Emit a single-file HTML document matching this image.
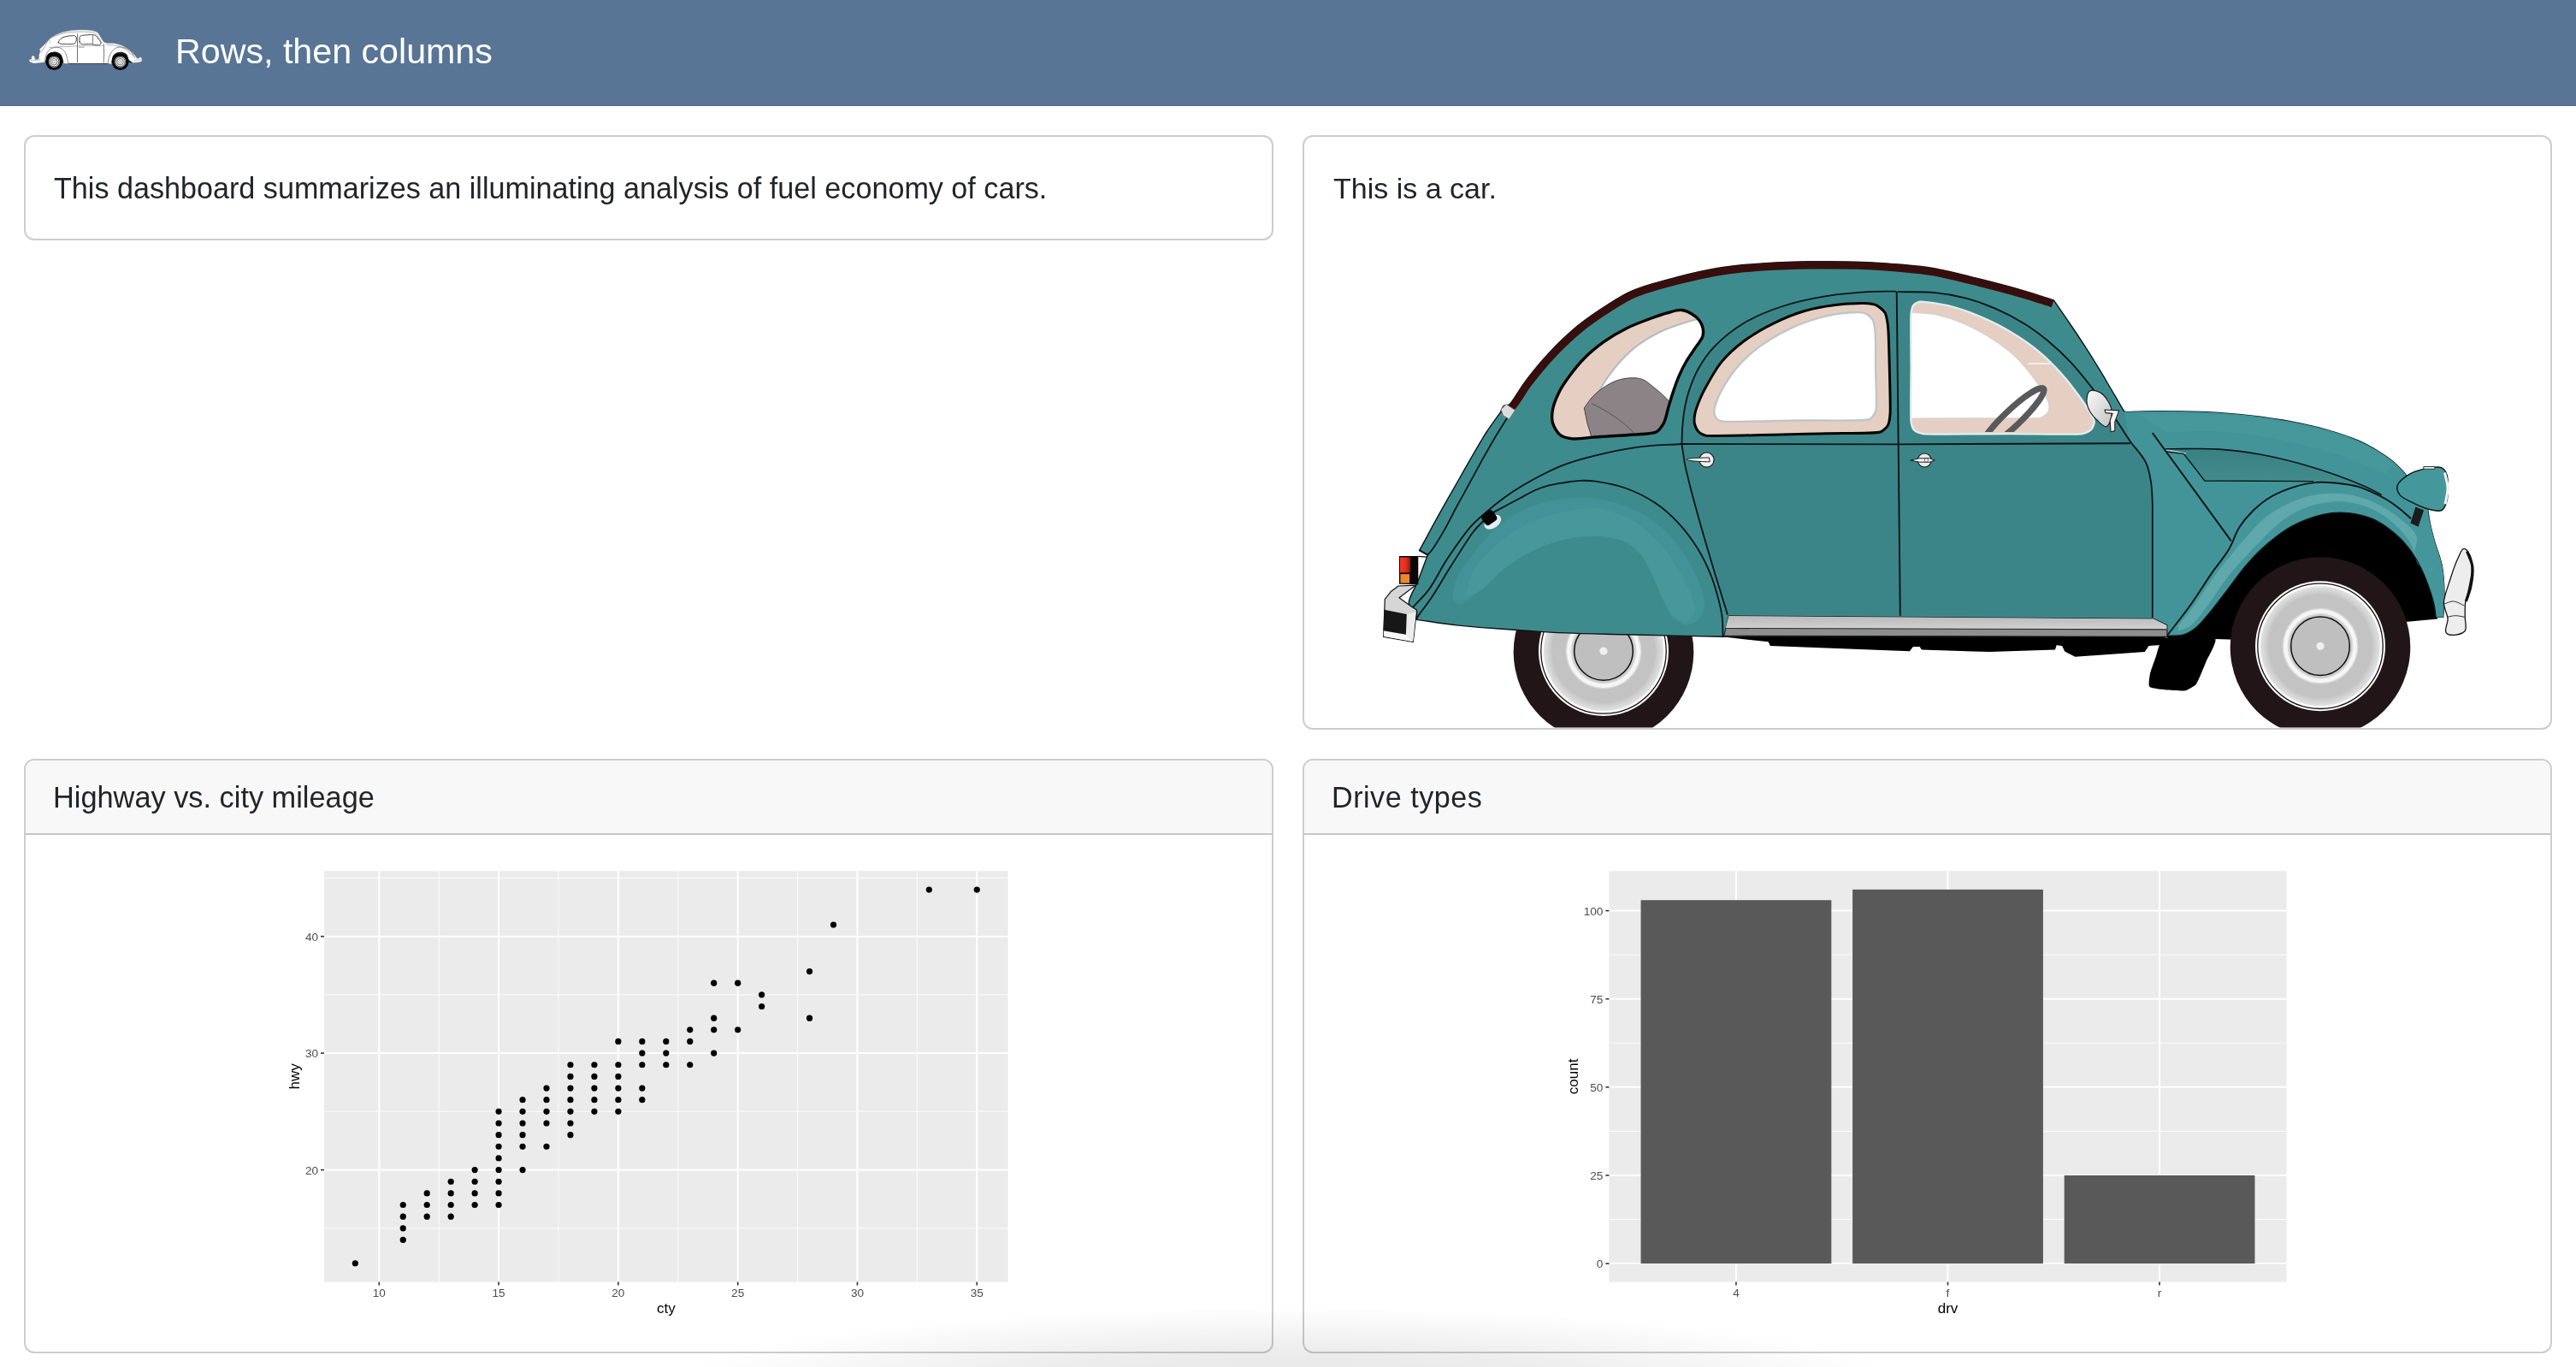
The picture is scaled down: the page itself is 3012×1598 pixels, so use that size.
<!DOCTYPE html>
<html lang="en">
<head>
<meta charset="utf-8">
<title>Rows, then columns</title>
<style>
html,body{margin:0;padding:0;}
body{width:3012px;height:1598px;overflow:hidden;background:#fff;position:relative;font-family:"Liberation Sans",sans-serif;color:#212529;}
.nav{position:absolute;left:0;top:0;width:3012px;height:124px;background:#587596;box-sizing:border-box;border-bottom:1px solid #4f6c92;}
.brand{will-change:transform;position:absolute;left:205px;top:0;height:121.5px;line-height:121.5px;font-size:41.2px;color:#fff;white-space:nowrap;}
.card{position:absolute;box-sizing:border-box;border:2px solid #cdcdcd;border-radius:12px;background:#fff;overflow:hidden;}
.card .hd{position:absolute;left:0;top:0;right:0;height:85px;background:#f8f8f8;border-bottom:2px solid #c7c7c7;}
.txt{will-change:transform;position:absolute;font-size:34.15px;white-space:nowrap;line-height:40px;}
svg{position:absolute;left:0;top:0;will-change:transform;}
.tk{font-family:"Liberation Sans",sans-serif;font-size:13.6px;fill:#4d4d4d;}
.ti{font-family:"Liberation Sans",sans-serif;font-size:17px;fill:#000;}
.shade{position:absolute;left:0;top:1500px;width:3012px;height:98px;pointer-events:none;
 background:radial-gradient(ellipse 720px 90px at 1508px 118px, rgba(0,0,0,.10) 0%, rgba(0,0,0,.07) 45%, rgba(0,0,0,0) 100%);}
</style>
</head>
<body>
<div class="nav">
<svg width="3012" height="124" viewBox="0 0 3012 124"><g transform="translate(24,24) scale(0.06219)">
<path d="M165,750C166,742.9 172.2,732.2 178,728C184.3,723.5 199.6,727.6 205,722C213.6,713.1 202.8,677.3 215,668C225.5,660 252.2,663.2 262,672C272.6,681.5 261.2,712.7 272,722C285.4,733.5 321.2,736 335,725C353.9,709.9 344.7,663.6 350,640C355.1,617.3 375.9,569.7 372,560C369.6,553.9 352.8,554.5 352,548C350.7,537.6 408.5,492.2 430,470C451.4,447.9 483.3,411.7 505,390C525.3,369.7 556.9,337.1 580,320C606,300.7 650.7,275.7 680,262C712.4,246.8 765.6,227.7 800,218C841.2,206.4 907.6,193.9 950,188C991.7,182.2 1057.9,177.4 1100,176C1142,174.6 1208.1,175 1250,178C1286.6,180.6 1350.8,186.9 1380,195C1398.2,200.1 1427.2,210.2 1442,222C1463.3,238.9 1484.9,277.4 1500,300C1514.5,321.7 1530.6,360.5 1548,380C1560.2,393.7 1582.8,413.6 1600,420C1627.6,430.2 1708.5,421.4 1750,428C1792.9,434.8 1859.5,452.3 1900,468C1929.4,479.4 1973.6,502.8 2000,520C2030,539.6 2074.1,575.2 2100,600C2121.5,620.6 2156.5,664.4 2170,680C2178.4,689.8 2187.5,711.9 2200,715C2218.2,719.4 2245.3,681.6 2262,690C2280.1,699.1 2290.4,742.6 2280,760C2263.4,787.8 2181.1,787.6 2150,792C2130.6,794.8 2099.6,794.2 2080,795C2048.6,796.3 1763.3,809.6 1640,812C1442.8,815.8 1097.4,818.1 900,812C776.6,808.2 496,784.5 460,785C437.5,785.3 402.4,790.2 380,792C344.1,794.9 286.1,807.5 250,802C226.2,798.4 176.1,777 170,770C166.2,765.7 164.2,755.7 165,750Z" fill="#fff" stroke="#8d97a3" stroke-width="9"/>
<path d="M470,760C480,723.3 478,681 500,650C518.7,623.6 549.3,605.4 580,595C611.6,584.3 647.7,581.6 680,590C710.4,597.9 739.8,615.9 760,640C783,667.5 791.3,708.8 800,740C805.5,759.5 806.7,780 810,800L470,800Z" fill="#111"/>
<path d="M1710,770C1720,733.3 1718.6,691.4 1740,660C1758.7,632.4 1788.7,611.3 1820,600C1851.4,588.7 1887.5,587.4 1920,595C1949.8,602 1979.8,617 2000,640C2023.7,667 2017.6,712 2040,740C2060.2,765.3 2093.3,776.7 2120,795L1710,800Z" fill="#222"/>
<circle cx="632" cy="775" r="158" fill="#050505"/>
<circle cx="632" cy="775" r="104" fill="#fff"/>
<circle cx="632" cy="775" r="90" fill="none" stroke="#111" stroke-width="13"/>
<circle cx="632" cy="775" r="60" fill="none" stroke="#333" stroke-width="11"/>
<circle cx="632" cy="775" r="34" fill="none" stroke="#777" stroke-width="9"/>
<circle cx="632" cy="775" r="10" fill="#777"/>
<circle cx="1875" cy="775" r="158" fill="#050505"/>
<circle cx="1875" cy="775" r="104" fill="#fff"/>
<circle cx="1875" cy="775" r="90" fill="none" stroke="#111" stroke-width="13"/>
<circle cx="1875" cy="775" r="60" fill="none" stroke="#333" stroke-width="11"/>
<circle cx="1875" cy="775" r="34" fill="none" stroke="#777" stroke-width="9"/>
<circle cx="1875" cy="775" r="10" fill="#777"/>
<path d="M455,780C463.3,736.7 463.3,690.8 480,650C496,611.1 517.3,571.5 550,545C577.9,522.4 614.3,509.1 650,505C686.9,500.8 726.8,505.4 760,522C793.3,538.6 820.2,568.4 840,600C862.4,635.7 868.8,679.3 880,720C888.3,750.3 893.3,781.3 900,812" fill="none" stroke="#4a4a4a" stroke-width="10.2" stroke-linecap="round"/>
<path d="M1640,812C1646.7,774.7 1647.8,735.9 1660,700C1674,659.1 1693.3,619 1720,585C1741.9,557.1 1768,530.2 1800,515C1830.5,500.5 1866.4,494.2 1900,498C1953.8,504 2007.6,526.4 2050,560C2094.9,595.7 2116.7,653.3 2150,700" fill="none" stroke="#4a4a4a" stroke-width="10.2" stroke-linecap="round"/>
<path d="M710,412C709.8,401.3 737.5,358.6 760,340C785.3,319.1 818.3,308.4 850,300C898.6,287.1 977.4,282.1 1000,285C1014.1,286.8 1031.4,288.7 1040,300C1053.8,318.1 1052.2,353.7 1047,380C1043.2,399.2 1036.5,421.5 1020,432C993.7,448.8 842.2,444.8 800,442C773.6,440.3 731.1,433.6 722,428C716.3,424.5 710.1,418.7 710,412Z" fill="none" stroke="#3a3a3a" stroke-width="15.299999999999999" stroke-linecap="round"/>
<path d="M1112,400C1106.4,376 1107.6,316.3 1118,300C1124.5,289.8 1138.3,286.1 1150,283C1168.7,278 1356.5,256.8 1400,275C1427.2,286.4 1443.5,315.5 1460,340C1480.6,370.6 1526.6,408.8 1507,440C1475.7,489.9 1369,442.1 1300,442C1245,441.9 1156.2,452.5 1135,440C1121.7,432.2 1115.5,415 1112,400Z" fill="none" stroke="#3a3a3a" stroke-width="15.299999999999999" stroke-linecap="round"/>
<path d="M1360,278L1358,440" stroke="#2a2a2a" stroke-width="10"/>
<path d="M1072,245L1068,790" stroke="#4a4a4a" stroke-width="13"/>
<path d="M1565,440L1570,640L1562,795" stroke="#4a4a4a" stroke-width="12" fill="none"/>
<path d="M1088,500L1200,503" stroke="#555" stroke-width="9"/>
<path d="M540,505C593.3,501.7 646.6,497.3 700,495C766.6,492.1 833.4,493.2 900,490C956.7,487.3 1013.3,482 1070,478" fill="none" stroke="#6a6a6a" stroke-width="8.5" stroke-linecap="round"/>
<path d="M1070,478C1233.3,475.3 1396.7,472.7 1560,470" fill="none" stroke="#777" stroke-width="8.5" stroke-linecap="round"/>
<path d="M650,290C700,273.3 748.6,251.7 800,240C865.5,225.1 933,219.6 1000,215C1083.1,209.3 1169.3,206.3 1250,212C1300.5,215.5 1365.1,216.3 1400,235C1421.8,246.7 1435.1,270.2 1450,290C1473.8,321.7 1503.3,376.7 1530,420" fill="none" stroke="#6a6a6a" stroke-width="8.5" stroke-linecap="round"/>
<path d="M1620,455C1663.3,458.3 1707.2,457.7 1750,465C1794.2,472.6 1838.1,484.1 1880,500C1921.8,515.9 1963.7,533.9 2000,560C2034.4,584.8 2060,620 2090,650" fill="none" stroke="#6a6a6a" stroke-width="8.5" stroke-linecap="round"/>
<path d="M1840,470C1876.7,486.7 1915.2,499.7 1950,520C1989.2,542.8 2026.5,569.4 2060,600C2086.2,623.9 2106.7,653.3 2130,680" fill="none" stroke="#aaa" stroke-width="6.8" stroke-linecap="round"/>
<path d="M505,395C486.7,430 469.3,465.5 450,500C431,533.9 410,566.7 390,600" fill="none" stroke="#6a6a6a" stroke-width="8.5" stroke-linecap="round"/>
<path d="M540,370C546.7,386.7 553.3,403.3 560,420" fill="none" stroke="#777" stroke-width="8.5" stroke-linecap="round"/>
<path d="M600,320C613.3,310 626.7,300 640,290" fill="none" stroke="#777" stroke-width="8.5" stroke-linecap="round"/>
<path d="M905,812L1635,812" stroke="#111" stroke-width="12"/>
<path d="M200,745C243.3,745 308.2,747.7 330,745C343.6,743.3 356.7,738.3 370,735" fill="none" stroke="#999" stroke-width="10.2" stroke-linecap="round"/>
<path d="M2150,745C2190,741.7 2230,738.3 2270,735" fill="none" stroke="#999" stroke-width="10.2" stroke-linecap="round"/>
</g></svg>

<div class="brand">Rows, then columns</div>
</div>

<div class="card" style="left:28px;top:158px;width:1461px;height:123px;"></div>
<div class="txt" style="left:63px;top:200px;">This dashboard summarizes an illuminating analysis of fuel economy of cars.</div>

<div class="card" style="left:1523px;top:158px;width:1461px;height:695px;"></div>
<div class="txt" style="left:1559px;top:200px;font-size:34px;">This is a car.</div>

<div class="card" style="left:28px;top:887px;width:1461px;height:695px;"><div class="hd"></div></div>
<div class="txt" style="left:62px;top:912px;font-size:34.35px;">Highway vs. city mileage</div>

<div class="card" style="left:1523px;top:887px;width:1461px;height:695px;"><div class="hd"></div></div>
<div class="txt" style="left:1557px;top:912px;letter-spacing:.5px;">Drive types</div>

<svg width="3012" height="1598" viewBox="0 0 3012 1598">
<g id="scatter">
<rect x="379" y="1018.2" width="799.6" height="480.4" fill="#ebebeb"/>
<line x1="513.2" x2="513.2" y1="1018.2" y2="1498.6" stroke="#fff" stroke-width="1" stroke-opacity=".85"/>
<line x1="652.99" x2="652.99" y1="1018.2" y2="1498.6" stroke="#fff" stroke-width="1" stroke-opacity=".85"/>
<line x1="792.78" x2="792.78" y1="1018.2" y2="1498.6" stroke="#fff" stroke-width="1" stroke-opacity=".85"/>
<line x1="932.57" x2="932.57" y1="1018.2" y2="1498.6" stroke="#fff" stroke-width="1" stroke-opacity=".85"/>
<line x1="1072.36" x2="1072.36" y1="1018.2" y2="1498.6" stroke="#fff" stroke-width="1" stroke-opacity=".85"/>
<line y1="1435.82" y2="1435.82" x1="379" x2="1178.6" stroke="#fff" stroke-width="1" stroke-opacity=".85"/>
<line y1="1299.34" y2="1299.34" x1="379" x2="1178.6" stroke="#fff" stroke-width="1" stroke-opacity=".85"/>
<line y1="1162.87" y2="1162.87" x1="379" x2="1178.6" stroke="#fff" stroke-width="1" stroke-opacity=".85"/>
<line y1="1026.39" y2="1026.39" x1="379" x2="1178.6" stroke="#fff" stroke-width="1" stroke-opacity=".85"/>
<line x1="443.3" x2="443.3" y1="1018.2" y2="1498.6" stroke="#fff" stroke-width="2"/>
<line x1="583.09" x2="583.09" y1="1018.2" y2="1498.6" stroke="#fff" stroke-width="2"/>
<line x1="722.88" x2="722.88" y1="1018.2" y2="1498.6" stroke="#fff" stroke-width="2"/>
<line x1="862.67" x2="862.67" y1="1018.2" y2="1498.6" stroke="#fff" stroke-width="2"/>
<line x1="1002.46" x2="1002.46" y1="1018.2" y2="1498.6" stroke="#fff" stroke-width="2"/>
<line x1="1142.25" x2="1142.25" y1="1018.2" y2="1498.6" stroke="#fff" stroke-width="2"/>
<line y1="1367.58" y2="1367.58" x1="379" x2="1178.6" stroke="#fff" stroke-width="2"/>
<line y1="1231.1" y2="1231.1" x1="379" x2="1178.6" stroke="#fff" stroke-width="2"/>
<line y1="1094.63" y2="1094.63" x1="379" x2="1178.6" stroke="#fff" stroke-width="2"/>
<circle cx="415.35" cy="1476.76" r="3.6"/>
<circle cx="471.26" cy="1449.47" r="3.6"/>
<circle cx="471.26" cy="1435.82" r="3.6"/>
<circle cx="471.26" cy="1422.17" r="3.6"/>
<circle cx="471.26" cy="1408.52" r="3.6"/>
<circle cx="499.22" cy="1422.17" r="3.6"/>
<circle cx="499.22" cy="1408.52" r="3.6"/>
<circle cx="499.22" cy="1394.88" r="3.6"/>
<circle cx="527.18" cy="1422.17" r="3.6"/>
<circle cx="527.18" cy="1408.52" r="3.6"/>
<circle cx="527.18" cy="1394.88" r="3.6"/>
<circle cx="527.18" cy="1381.23" r="3.6"/>
<circle cx="555.14" cy="1408.52" r="3.6"/>
<circle cx="555.14" cy="1394.88" r="3.6"/>
<circle cx="555.14" cy="1381.23" r="3.6"/>
<circle cx="555.14" cy="1367.58" r="3.6"/>
<circle cx="583.09" cy="1408.52" r="3.6"/>
<circle cx="583.09" cy="1394.88" r="3.6"/>
<circle cx="583.09" cy="1381.23" r="3.6"/>
<circle cx="583.09" cy="1367.58" r="3.6"/>
<circle cx="583.09" cy="1353.93" r="3.6"/>
<circle cx="583.09" cy="1340.29" r="3.6"/>
<circle cx="583.09" cy="1326.64" r="3.6"/>
<circle cx="583.09" cy="1312.99" r="3.6"/>
<circle cx="583.09" cy="1299.34" r="3.6"/>
<circle cx="611.05" cy="1367.58" r="3.6"/>
<circle cx="611.05" cy="1340.29" r="3.6"/>
<circle cx="611.05" cy="1326.64" r="3.6"/>
<circle cx="611.05" cy="1312.99" r="3.6"/>
<circle cx="611.05" cy="1299.34" r="3.6"/>
<circle cx="611.05" cy="1285.7" r="3.6"/>
<circle cx="639.01" cy="1340.29" r="3.6"/>
<circle cx="639.01" cy="1312.99" r="3.6"/>
<circle cx="639.01" cy="1299.34" r="3.6"/>
<circle cx="639.01" cy="1285.7" r="3.6"/>
<circle cx="639.01" cy="1272.05" r="3.6"/>
<circle cx="666.97" cy="1326.64" r="3.6"/>
<circle cx="666.97" cy="1312.99" r="3.6"/>
<circle cx="666.97" cy="1299.34" r="3.6"/>
<circle cx="666.97" cy="1285.7" r="3.6"/>
<circle cx="666.97" cy="1272.05" r="3.6"/>
<circle cx="666.97" cy="1258.4" r="3.6"/>
<circle cx="666.97" cy="1244.75" r="3.6"/>
<circle cx="694.93" cy="1299.34" r="3.6"/>
<circle cx="694.93" cy="1285.7" r="3.6"/>
<circle cx="694.93" cy="1272.05" r="3.6"/>
<circle cx="694.93" cy="1258.4" r="3.6"/>
<circle cx="694.93" cy="1244.75" r="3.6"/>
<circle cx="722.88" cy="1299.34" r="3.6"/>
<circle cx="722.88" cy="1285.7" r="3.6"/>
<circle cx="722.88" cy="1272.05" r="3.6"/>
<circle cx="722.88" cy="1258.4" r="3.6"/>
<circle cx="722.88" cy="1244.75" r="3.6"/>
<circle cx="722.88" cy="1217.46" r="3.6"/>
<circle cx="750.84" cy="1285.7" r="3.6"/>
<circle cx="750.84" cy="1272.05" r="3.6"/>
<circle cx="750.84" cy="1244.75" r="3.6"/>
<circle cx="750.84" cy="1231.1" r="3.6"/>
<circle cx="750.84" cy="1217.46" r="3.6"/>
<circle cx="778.8" cy="1244.75" r="3.6"/>
<circle cx="778.8" cy="1231.1" r="3.6"/>
<circle cx="778.8" cy="1217.46" r="3.6"/>
<circle cx="806.76" cy="1244.75" r="3.6"/>
<circle cx="806.76" cy="1217.46" r="3.6"/>
<circle cx="806.76" cy="1203.81" r="3.6"/>
<circle cx="834.72" cy="1231.1" r="3.6"/>
<circle cx="834.72" cy="1203.81" r="3.6"/>
<circle cx="834.72" cy="1190.16" r="3.6"/>
<circle cx="834.72" cy="1149.22" r="3.6"/>
<circle cx="862.67" cy="1203.81" r="3.6"/>
<circle cx="862.67" cy="1149.22" r="3.6"/>
<circle cx="890.63" cy="1176.51" r="3.6"/>
<circle cx="890.63" cy="1162.87" r="3.6"/>
<circle cx="946.55" cy="1190.16" r="3.6"/>
<circle cx="946.55" cy="1135.57" r="3.6"/>
<circle cx="974.51" cy="1080.98" r="3.6"/>
<circle cx="1086.34" cy="1040.04" r="3.6"/>
<circle cx="1142.25" cy="1040.04" r="3.6"/>
<line x1="443.3" x2="443.3" y1="1498.6" y2="1502.6" stroke="#333" stroke-width="1.6"/>
<text x="443.3" y="1515.9" text-anchor="middle" class="tk">10</text>
<line x1="583.09" x2="583.09" y1="1498.6" y2="1502.6" stroke="#333" stroke-width="1.6"/>
<text x="583.09" y="1515.9" text-anchor="middle" class="tk">15</text>
<line x1="722.88" x2="722.88" y1="1498.6" y2="1502.6" stroke="#333" stroke-width="1.6"/>
<text x="722.88" y="1515.9" text-anchor="middle" class="tk">20</text>
<line x1="862.67" x2="862.67" y1="1498.6" y2="1502.6" stroke="#333" stroke-width="1.6"/>
<text x="862.67" y="1515.9" text-anchor="middle" class="tk">25</text>
<line x1="1002.46" x2="1002.46" y1="1498.6" y2="1502.6" stroke="#333" stroke-width="1.6"/>
<text x="1002.46" y="1515.9" text-anchor="middle" class="tk">30</text>
<line x1="1142.25" x2="1142.25" y1="1498.6" y2="1502.6" stroke="#333" stroke-width="1.6"/>
<text x="1142.25" y="1515.9" text-anchor="middle" class="tk">35</text>
<line y1="1367.58" y2="1367.58" x1="375" x2="379" stroke="#333" stroke-width="1.6"/>
<text x="372" y="1372.58" text-anchor="end" class="tk">20</text>
<line y1="1231.1" y2="1231.1" x1="375" x2="379" stroke="#333" stroke-width="1.6"/>
<text x="372" y="1236.1" text-anchor="end" class="tk">30</text>
<line y1="1094.63" y2="1094.63" x1="375" x2="379" stroke="#333" stroke-width="1.6"/>
<text x="372" y="1099.63" text-anchor="end" class="tk">40</text>
<text x="778.8" y="1534.9" text-anchor="middle" class="ti">cty</text>
<text transform="translate(349.8,1258.4) rotate(-90)" text-anchor="middle" class="ti">hwy</text>
</g>
<g id="bars">
<rect x="1881.4" y="1018.2" width="792.2" height="480.4" fill="#ebebeb"/>
<line y1="1425.54" y2="1425.54" x1="1881.4" x2="2673.6" stroke="#fff" stroke-width="1" stroke-opacity=".85"/>
<line y1="1322.41" y2="1322.41" x1="1881.4" x2="2673.6" stroke="#fff" stroke-width="1" stroke-opacity=".85"/>
<line y1="1219.29" y2="1219.29" x1="1881.4" x2="2673.6" stroke="#fff" stroke-width="1" stroke-opacity=".85"/>
<line y1="1116.16" y2="1116.16" x1="1881.4" x2="2673.6" stroke="#fff" stroke-width="1" stroke-opacity=".85"/>
<line y1="1477.1" y2="1477.1" x1="1881.4" x2="2673.6" stroke="#fff" stroke-width="2"/>
<line y1="1373.97" y2="1373.97" x1="1881.4" x2="2673.6" stroke="#fff" stroke-width="2"/>
<line y1="1270.85" y2="1270.85" x1="1881.4" x2="2673.6" stroke="#fff" stroke-width="2"/>
<line y1="1167.72" y2="1167.72" x1="1881.4" x2="2673.6" stroke="#fff" stroke-width="2"/>
<line y1="1064.6" y2="1064.6" x1="1881.4" x2="2673.6" stroke="#fff" stroke-width="2"/>
<line x1="2029.94" x2="2029.94" y1="1018.2" y2="1498.6" stroke="#fff" stroke-width="2"/>
<line x1="2277.5" x2="2277.5" y1="1018.2" y2="1498.6" stroke="#fff" stroke-width="2"/>
<line x1="2525.06" x2="2525.06" y1="1018.2" y2="1498.6" stroke="#fff" stroke-width="2"/>
<rect x="1918.53" y="1052.22" width="222.81" height="424.88" fill="#595959"/>
<rect x="2166.1" y="1039.85" width="222.81" height="437.25" fill="#595959"/>
<rect x="2413.66" y="1373.97" width="222.81" height="103.12" fill="#595959"/>
<line x1="2029.94" x2="2029.94" y1="1498.6" y2="1502.6" stroke="#333" stroke-width="1.6"/>
<text x="2029.94" y="1515.9" text-anchor="middle" class="tk">4</text>
<line x1="2277.5" x2="2277.5" y1="1498.6" y2="1502.6" stroke="#333" stroke-width="1.6"/>
<text x="2277.5" y="1515.9" text-anchor="middle" class="tk">f</text>
<line x1="2525.06" x2="2525.06" y1="1498.6" y2="1502.6" stroke="#333" stroke-width="1.6"/>
<text x="2525.06" y="1515.9" text-anchor="middle" class="tk">r</text>
<line y1="1477.1" y2="1477.1" x1="1877.4" x2="1881.4" stroke="#333" stroke-width="1.6"/>
<text x="1874.4" y="1482.1" text-anchor="end" class="tk">0</text>
<line y1="1373.97" y2="1373.97" x1="1877.4" x2="1881.4" stroke="#333" stroke-width="1.6"/>
<text x="1874.4" y="1378.97" text-anchor="end" class="tk">25</text>
<line y1="1270.85" y2="1270.85" x1="1877.4" x2="1881.4" stroke="#333" stroke-width="1.6"/>
<text x="1874.4" y="1275.85" text-anchor="end" class="tk">50</text>
<line y1="1167.72" y2="1167.72" x1="1877.4" x2="1881.4" stroke="#333" stroke-width="1.6"/>
<text x="1874.4" y="1172.72" text-anchor="end" class="tk">75</text>
<line y1="1064.6" y2="1064.6" x1="1877.4" x2="1881.4" stroke="#333" stroke-width="1.6"/>
<text x="1874.4" y="1069.6" text-anchor="end" class="tk">100</text>
<text x="2277.5" y="1534.9" text-anchor="middle" class="ti">drv</text>
<text transform="translate(1845.2,1258.4) rotate(-90)" text-anchor="middle" class="ti">count</text>
</g>
</svg>
<svg width="3012" height="1598" viewBox="0 0 3012 1598">
<defs><clipPath id="cardclip"><rect x="1525" y="160" width="1457" height="690.6" rx="12"/></clipPath>
<clipPath id="bodyclip"><path d="M1754.3,482.1C1755.6,479.6 1756,476.3 1758.2,474.5C1760,473.1 1763,474.2 1764.8,472.9C1767.8,470.9 1777.1,454.2 1783.9,445.3C1792.2,434.4 1800.8,423.7 1810.2,413.7C1821.2,401.9 1832.8,390.6 1845.3,380.4C1856.4,371.3 1868.3,363.4 1880.4,355.8C1889.5,350.1 1898.6,344.2 1908.5,340C1924.3,333.2 1942.6,328.8 1960,324.2C1977.4,319.7 1994.9,315.6 2012.7,312.8C2030.1,310.1 2047.7,308.7 2065.3,307.6C2082.8,306.4 2100.4,306 2118,305.8C2135.5,305.6 2153.1,305.6 2170.6,306.1C2188.2,306.7 2205.8,307.7 2223.3,309.3C2236.5,310.5 2249.6,311.7 2262.7,314C2280.4,317.2 2297.8,322 2315.3,326.3C2332.9,330.7 2350.5,335.3 2368,340.4C2379.2,343.6 2390.2,347.4 2401.3,350.9C2407.8,360.3 2414.3,369.6 2420.6,379C2426.6,387.7 2432.5,396.5 2438.2,405.3C2444.2,414.6 2450,424 2455.7,433.4C2461.7,443.3 2467.7,453.9 2473.3,463.2C2476.8,469.1 2482.6,479.9 2483.8,480.8C2484.6,481.4 2485.6,481.3 2486.5,481.6C2500.7,481.3 2514.8,480.7 2528.9,480.8C2550.7,480.8 2572.4,481 2594.1,482.4C2610.5,483.4 2626.8,485.1 2643.1,487.3C2659.4,489.5 2675.8,492.1 2692,495.4C2702.9,497.7 2713.8,500.4 2724.6,503.6C2735.6,506.9 2746.6,510.4 2757.2,515C2765.7,518.7 2773.8,523.2 2781.6,528C2787.3,531.5 2792.9,535.2 2798,539.5C2802.7,543.4 2808.1,549.2 2811,552.5C2812.8,554.6 2814.3,556.9 2815.9,559L2838.7,595.7C2839.5,600.9 2840.1,606.1 2841.2,611.2C2842.5,617.9 2844.3,624.6 2846.1,631.2C2849,641.5 2853.4,651.4 2855.4,661.9C2857.4,672.7 2857.8,683.7 2858,694.7C2858.2,703.6 2857.2,712.4 2856.8,721.3L2848.2,721.3C2847.5,716.5 2847.2,711.7 2846.1,707C2844.6,700 2842.4,693.2 2840,686.5C2837,678.1 2833.9,669.8 2829.7,661.9C2825.6,654 2821,646.3 2815.4,639.4C2810,632.6 2803.8,626.4 2797,621C2790,615.4 2782.6,610.1 2774.4,606.6C2765.4,602.7 2755.6,600.3 2745.8,599.5C2735.6,598.5 2725.1,599.3 2715.1,601.5C2702.9,604.2 2691.2,608.9 2680.2,614.8C2669.9,620.4 2660.5,627.7 2651.6,635.3C2642.7,642.8 2634.6,651.2 2627,659.9C2619.6,668.3 2613.3,677.6 2606.5,686.5C2599.7,695.4 2593.2,704.5 2586,713.1C2580.1,720.2 2574.4,728.1 2567.6,733.6C2563.3,737.1 2558.5,740.2 2553.3,741.8C2547,743.7 2540.3,742.8 2533.8,743.2L2014.5,744.3C1999.9,744 1985.3,743.8 1970.6,743.4C1947.2,742.9 1923.8,742.3 1900.4,741.7C1877,741.1 1853.6,740.9 1830.2,739.9C1806.8,738.9 1783.4,737.2 1760,735.5C1741.8,734.2 1723.5,733.1 1705.3,731.1C1688.6,729.3 1672,726.5 1655.3,724.1C1655.7,720.9 1657.6,717.5 1656.5,714.5C1655.1,710.6 1648.3,710.1 1647.4,706C1645.9,699.6 1654.5,688.3 1657.9,679.4C1660.9,671.5 1665.3,659.4 1666.7,655.7C1667.6,653.3 1668.5,651 1669.3,648.6L1659.7,643.4C1665,633.7 1670.2,623.9 1675.5,614.2C1680.6,604.8 1685.8,595.5 1691.1,586.1C1696.3,576.9 1701.6,567.7 1706.9,558.5C1712.2,549.3 1717.3,540 1722.7,530.8C1727.9,522 1732.9,513.1 1738.5,504.5C1743.5,496.9 1749,489.6 1754.3,482.1Z"/></clipPath>
<linearGradient id="hoodg" x1="0" y1="0" x2="0" y2="1"><stop offset="0" stop-color="#3a8083"/><stop offset="1" stop-color="#44918f"/></linearGradient>
<linearGradient id="mirg" x1="0" y1="0" x2="1" y2="1"><stop offset="0" stop-color="#fafafa"/><stop offset="1" stop-color="#c4c4c4"/></linearGradient>
<radialGradient id="hubg" cx=".5" cy=".5" r=".5"><stop offset=".86" stop-color="#c3c3c3"/><stop offset=".88" stop-color="#c9c9c9"/><stop offset="1" stop-color="#e2e2e2"/></radialGradient>
</defs>
<g clip-path="url(#cardclip)">
<path d="M2530.7,737.7L2606.5,661.9L2684.3,604.6L2756,596.4L2817.5,631.2L2848.2,694.7L2850.2,723.4L2807.2,727.5L2622.9,747.9L2590.1,746.9L2530.7,744.9Z" fill="#000"/>
<path d="M2016.3,741.9L2534.6,741.9L2526.4,754L2512.5,755L2507.8,762L2426.3,767.8L2414.2,761.5L2411.1,755L2404.6,754.3L2403,759.6L2326.1,762L2246.9,759.6L2244.6,756.1L2236.9,756.1L2232.9,761.3L2069.9,755L2067.6,750.3L2017.5,744.7Z" fill="#000"/>
<path d="M2528.7,746.9C2533.7,743.4 2585.9,740.1 2590.1,746.3C2592.8,750.2 2581.7,768.2 2579.9,772.5C2577.9,777.2 2570.1,797.3 2567.6,800.2C2566,801.9 2557.6,806.8 2555.3,807.3C2551.6,808.1 2515.9,805.9 2513.3,802.8C2511.7,800.9 2513.5,790.3 2513.9,787.9C2514.5,784.5 2519.3,771.6 2520.5,768.4C2521.8,764.8 2525.5,749.1 2528.7,746.9Z" fill="#000"/>
<circle cx="1875" cy="762.2" r="105.3" fill="#221517"/>
<circle cx="1875" cy="761" r="76" fill="#fbfbfb"/>
<circle cx="1875" cy="761" r="73.2" fill="none" stroke="#141414" stroke-width="1.3"/>
<circle cx="1875" cy="761" r="70" fill="url(#hubg)"/>
<circle cx="1875" cy="761" r="44.5" fill="#d8d8d8"/>
<circle cx="1875" cy="761" r="43" fill="#f6f6f6"/>
<circle cx="1875" cy="761" r="38.5" fill="#dcdcdc"/>
<circle cx="1875" cy="761" r="37" fill="#c9c9c9"/>
<circle cx="1875" cy="761" r="34.3" fill="#bfbfbf" stroke="#111" stroke-width="1.5"/>
<circle cx="1875" cy="761" r="4.6" fill="#efefef"/>
<circle cx="2713" cy="756.5" r="105.3" fill="#221517"/>
<circle cx="2713" cy="755.3" r="76" fill="#fbfbfb"/>
<circle cx="2713" cy="755.3" r="73.2" fill="none" stroke="#141414" stroke-width="1.3"/>
<circle cx="2713" cy="755.3" r="70" fill="url(#hubg)"/>
<circle cx="2713" cy="755.3" r="44.5" fill="#d8d8d8"/>
<circle cx="2713" cy="755.3" r="43" fill="#f6f6f6"/>
<circle cx="2713" cy="755.3" r="38.5" fill="#dcdcdc"/>
<circle cx="2713" cy="755.3" r="37" fill="#c9c9c9"/>
<circle cx="2713" cy="755.3" r="34.3" fill="#bfbfbf" stroke="#111" stroke-width="1.5"/>
<circle cx="2713" cy="755.3" r="4.6" fill="#efefef"/>
<path d="M1754.3,482.1C1755.6,479.6 1756,476.3 1758.2,474.5C1760,473.1 1763,474.2 1764.8,472.9C1767.8,470.9 1777.1,454.2 1783.9,445.3C1792.2,434.4 1800.8,423.7 1810.2,413.7C1821.2,401.9 1832.8,390.6 1845.3,380.4C1856.4,371.3 1868.3,363.4 1880.4,355.8C1889.5,350.1 1898.6,344.2 1908.5,340C1924.3,333.2 1942.6,328.8 1960,324.2C1977.4,319.7 1994.9,315.6 2012.7,312.8C2030.1,310.1 2047.7,308.7 2065.3,307.6C2082.8,306.4 2100.4,306 2118,305.8C2135.5,305.6 2153.1,305.6 2170.6,306.1C2188.2,306.7 2205.8,307.7 2223.3,309.3C2236.5,310.5 2249.6,311.7 2262.7,314C2280.4,317.2 2297.8,322 2315.3,326.3C2332.9,330.7 2350.5,335.3 2368,340.4C2379.2,343.6 2390.2,347.4 2401.3,350.9C2407.8,360.3 2414.3,369.6 2420.6,379C2426.6,387.7 2432.5,396.5 2438.2,405.3C2444.2,414.6 2450,424 2455.7,433.4C2461.7,443.3 2467.7,453.9 2473.3,463.2C2476.8,469.1 2482.6,479.9 2483.8,480.8C2484.6,481.4 2485.6,481.3 2486.5,481.6C2500.7,481.3 2514.8,480.7 2528.9,480.8C2550.7,480.8 2572.4,481 2594.1,482.4C2610.5,483.4 2626.8,485.1 2643.1,487.3C2659.4,489.5 2675.8,492.1 2692,495.4C2702.9,497.7 2713.8,500.4 2724.6,503.6C2735.6,506.9 2746.6,510.4 2757.2,515C2765.7,518.7 2773.8,523.2 2781.6,528C2787.3,531.5 2792.9,535.2 2798,539.5C2802.7,543.4 2808.1,549.2 2811,552.5C2812.8,554.6 2814.3,556.9 2815.9,559L2838.7,595.7C2839.5,600.9 2840.1,606.1 2841.2,611.2C2842.5,617.9 2844.3,624.6 2846.1,631.2C2849,641.5 2853.4,651.4 2855.4,661.9C2857.4,672.7 2857.8,683.7 2858,694.7C2858.2,703.6 2857.2,712.4 2856.8,721.3L2848.2,721.3C2847.5,716.5 2847.2,711.7 2846.1,707C2844.6,700 2842.4,693.2 2840,686.5C2837,678.1 2833.9,669.8 2829.7,661.9C2825.6,654 2821,646.3 2815.4,639.4C2810,632.6 2803.8,626.4 2797,621C2790,615.4 2782.6,610.1 2774.4,606.6C2765.4,602.7 2755.6,600.3 2745.8,599.5C2735.6,598.5 2725.1,599.3 2715.1,601.5C2702.9,604.2 2691.2,608.9 2680.2,614.8C2669.9,620.4 2660.5,627.7 2651.6,635.3C2642.7,642.8 2634.6,651.2 2627,659.9C2619.6,668.3 2613.3,677.6 2606.5,686.5C2599.7,695.4 2593.2,704.5 2586,713.1C2580.1,720.2 2574.4,728.1 2567.6,733.6C2563.3,737.1 2558.5,740.2 2553.3,741.8C2547,743.7 2540.3,742.8 2533.8,743.2L2014.5,744.3C1999.9,744 1985.3,743.8 1970.6,743.4C1947.2,742.9 1923.8,742.3 1900.4,741.7C1877,741.1 1853.6,740.9 1830.2,739.9C1806.8,738.9 1783.4,737.2 1760,735.5C1741.8,734.2 1723.5,733.1 1705.3,731.1C1688.6,729.3 1672,726.5 1655.3,724.1C1655.7,720.9 1657.6,717.5 1656.5,714.5C1655.1,710.6 1648.3,710.1 1647.4,706C1645.9,699.6 1654.5,688.3 1657.9,679.4C1660.9,671.5 1665.3,659.4 1666.7,655.7C1667.6,653.3 1668.5,651 1669.3,648.6L1659.7,643.4C1665,633.7 1670.2,623.9 1675.5,614.2C1680.6,604.8 1685.8,595.5 1691.1,586.1C1696.3,576.9 1701.6,567.7 1706.9,558.5C1712.2,549.3 1717.3,540 1722.7,530.8C1727.9,522 1732.9,513.1 1738.5,504.5C1743.5,496.9 1749,489.6 1754.3,482.1Z" fill="#3e8b8e" stroke="#0c1416" stroke-width="1.4" stroke-linejoin="round"/>
<path d="M1754.3,482.1C1755.6,479.6 1756,476.3 1758.2,474.5C1760,473.1 1763,474.2 1764.8,472.9C1767.8,470.9 1777.1,454.2 1783.9,445.3C1792.2,434.4 1800.8,423.7 1810.2,413.7C1821.2,401.9 1832.8,390.6 1845.3,380.4C1856.4,371.3 1868.3,363.4 1880.4,355.8C1889.5,350.1 1898.6,344.2 1908.5,340C1924.3,333.2 1942.6,328.8 1960,324.2C1977.4,319.7 1994.9,315.6 2012.7,312.8C2030.1,310.1 2047.7,308.7 2065.3,307.6C2082.8,306.4 2100.4,306 2118,305.8C2135.5,305.6 2153.1,305.6 2170.6,306.1C2188.2,306.7 2205.8,307.7 2223.3,309.3C2236.5,310.5 2249.6,311.7 2262.7,314C2280.4,317.2 2297.8,322 2315.3,326.3C2332.9,330.7 2350.5,335.3 2368,340.4C2379.2,343.6 2390.2,347.4 2401.3,350.9" fill="none" stroke="#380e0c" stroke-width="17.4" clip-path="url(#bodyclip)"/>
<path d="M2019.8,718C2015.1,702.8 2010.3,687.6 2005.7,672.3C1999.8,652.5 1993.8,632.6 1988.2,612.7C1983.7,596.7 1978.2,576.8 1975.2,564.7C1973.3,557.1 1971.4,549.5 1969.9,541.9C1968.5,534.3 1966.9,526.7 1966.4,519C1966,512 1966.7,505 1967.3,498C1967.9,490.9 1968.6,483.9 1969.9,476.9C1971.3,469.8 1972.9,462.7 1975.2,455.9C1978.1,447.4 1981.4,439 1985.7,431.3C1990.8,422.2 1996.7,413.4 2003.9,405.9C2014.2,395 2026.2,385.5 2039,377.8C2052.7,369.5 2067.7,363.5 2082.9,358.5C2100,352.8 2117.7,349.1 2135.5,346.2C2152.9,343.3 2173.2,341.7 2188.2,340.9C2197.5,340.4 2214.4,340.4 2216.3,340.6C2217.4,340.7 2218.5,341.1 2219.7,341.2C2221.5,341.5 2248.4,340.7 2262.7,342.1C2274.5,343.3 2286.3,345.3 2297.8,348.3C2309.8,351.4 2321.5,355.6 2332.9,360.6C2345,365.8 2356.8,372 2368,379C2377.2,384.8 2385.9,391.4 2394.3,398.3C2403.6,406 2412.4,414.1 2420.6,422.9C2430.1,432.8 2438.5,443.7 2447,454.5C2456,465.9 2464.8,477.6 2473.3,489.6C2479.4,498.2 2484.8,507.3 2490.8,515.9C2496.8,524.4 2504.9,531.7 2509.3,541.1C2512.7,548.2 2513.8,556.2 2515.1,563.9C2516.3,571.5 2516.4,579.4 2516.7,586.7C2516.9,591.3 2516.8,595.9 2516.8,600.5C2516.8,607.8 2516.8,681 2516.8,721.3Z" fill="#3b8588"/>
<path d="M2483.8,480.8C2485.7,490.2 2487,507.2 2490.8,515.9C2494.2,523.5 2505.8,533.5 2509.3,541.1C2512,546.8 2514.1,557.7 2515.1,563.9C2516,569.9 2516.5,580.9 2516.7,586.7C2516.8,590.4 2516.8,596.8 2516.8,600.5C2516.8,606.3 2516.8,689.1 2516.8,721.3L2533.8,743.2L2900,800L2900,440L2486.5,472.6Z" fill="#429498" clip-path="url(#bodyclip)"/>
<path d="M1698.3,700.4C1699.5,693.4 1699.3,686 1701.8,679.4C1705.7,669.1 1712.8,660.2 1719.4,651.3C1727.4,640.6 1735.9,630.1 1745.7,621C1754.8,612.6 1764.6,604.9 1775.5,599C1786.5,593.1 1798.5,588.9 1810.6,586C1821.8,583.3 1834.2,582.4 1845,582C1851.8,581.7 1858.6,581.8 1865.3,582.8C1876,584.3 1889.2,587.2 1900.4,591.6C1912.8,596.5 1924.8,602.9 1935.5,610.9C1945.4,618.3 1954.2,627.4 1961.9,637.2C1969.5,646.9 1975.8,657.7 1981.2,668.8C1985.6,677.8 1990,687.7 1991.7,696.9C1992.8,702.7 1993.8,708.9 1992,714.5C1990.4,719.4 1987,723.8 1982.9,726.8C1979.4,729.4 1974.7,729.7 1970.6,731.1C1965.9,727.9 1960.5,725.6 1956.6,721.5C1951.1,715.5 1948,707.7 1944.3,700.4C1939.7,691.3 1936.6,681.4 1932,672.3C1927.8,663.9 1924.2,654.8 1918,647.8C1912.2,641.2 1905,635.5 1896.9,632C1887.1,627.8 1876,627.1 1865.3,626.7C1853.5,626.3 1841.7,627.7 1830.2,630.2C1818.1,632.9 1806.3,637.2 1795.1,642.5C1782,648.7 1769.5,656.5 1758,665.3C1748.5,672.6 1741.3,682.7 1731.7,689.9C1723.5,696.1 1710,706 1705.3,705.7C1702.4,705.5 1700.6,702.2 1698.3,700.4Z" fill="#439297"/>
<path d="M1712.3,698.7C1715.8,688.2 1717.4,676.7 1722.9,667.1C1729.5,655.6 1739.4,646.2 1749.2,637.2C1757.2,629.9 1766,623.3 1775.5,617.9C1786.5,611.6 1800.4,606.5 1810.6,603C1817,600.8 1823.6,599.2 1830.2,598C1840.8,596.1 1853.6,593.2 1865.3,594.2C1877.4,595.2 1889.4,598.9 1900.4,603.9C1910,608.3 1918.7,614.6 1926.7,621.4C1935.2,628.7 1942.8,637.1 1949.6,646C1956.3,654.8 1961.8,664.4 1967.1,674.1C1971.7,682.6 1977,692.2 1979.4,700.4C1980.9,705.5 1983.1,711.1 1981.5,716.2C1979.9,721.4 1974.2,724.4 1970.6,728.5C1965.9,726.2 1960.4,725.1 1956.6,721.5C1950.7,715.9 1948,707.7 1944.3,700.4C1939.7,691.3 1936.6,681.4 1932,672.3C1927.8,663.9 1924.2,654.8 1918,647.8C1912.2,641.2 1905,635.5 1896.9,632C1887.1,627.8 1876,627.1 1865.3,626.7C1853.5,626.3 1841.7,627.7 1830.2,630.2C1818.1,632.9 1806.3,637.2 1795.1,642.5C1782,648.7 1769.5,656.5 1758,665.3C1748.5,672.6 1741.1,683.6 1731.7,689.9C1725.8,693.8 1718.8,695.8 1712.3,698.7Z" fill="#48979a"/>
<linearGradient id="hoodhl" x1="0" y1="0" x2="0" y2="1"><stop offset="0" stop-color="#4fa0a3" stop-opacity="0"/><stop offset=".45" stop-color="#4fa0a3" stop-opacity=".55"/><stop offset="1" stop-color="#4fa0a3" stop-opacity="0"/></linearGradient>
<path d="M2499.6,483.7C2531.1,484.1 2568,483.4 2594.1,484.8C2610.5,485.8 2626.8,487.6 2643.1,489.7C2659.4,491.9 2675.8,494.5 2692,497.9C2702.9,500.2 2713.8,502.8 2724.6,506C2735.6,509.3 2746.6,512.8 2757.2,517.4C2765.7,521.2 2773.8,525.7 2781.6,530.5C2787.3,534 2792.5,538.1 2798,541.9L2789.8,554.1C2781.6,550.9 2773.5,547.6 2765.3,544.4C2754.5,540 2743.8,535.1 2732.7,531.3C2719.4,526.8 2705.7,523.2 2692,519.9C2675.8,516 2659.5,512.7 2643.1,510.1C2626.8,507.5 2610.5,505.2 2594.1,504.4C2574.1,503.4 2553.9,504.9 2533.8,505.2Z" fill="#4c9da0" opacity=".45" clip-path="url(#bodyclip)"/>
<path d="M2532.2,524.8C2552.8,524.9 2573.5,523.8 2594.1,525.1C2610.5,526.2 2626.9,528.4 2643.1,531.3C2659.5,534.3 2675.8,538.3 2692,542.7C2705.7,546.5 2719.3,550.9 2732.7,555.8C2743.7,559.7 2754.7,564 2765.3,568.8C2772,571.8 2778.4,575.3 2784.9,578.6L2765.3,570.4L2740.9,565.6L2705,562.6L2577.8,562L2553.4,530.5Z" fill="url(#hoodg)"/>
<path d="M2532.2,524.8L2556.6,529.4L2554.2,531.6L2533.8,528Z" fill="#9acdd0"/>
<path d="M2532.2,524.8C2552.8,524.9 2573.5,523.8 2594.1,525.1C2610.5,526.2 2626.9,528.4 2643.1,531.3C2659.5,534.3 2675.8,538.3 2692,542.7C2705.7,546.5 2719.3,550.9 2732.7,555.8C2743.7,559.7 2754.7,564 2765.3,568.8C2772,571.8 2778.4,575.3 2784.9,578.6" fill="none" stroke="#0c1416" stroke-width="1.6"/>
<path d="M2533.8,528L2553.4,530.5L2577.8,562L2705,562.6" fill="none" stroke="#0c1416" stroke-width="1.3"/>
<path d="M2533.8,743.2C2543,731.2 2552.6,719.4 2561.4,707C2570,695 2577.6,682.3 2586,670.1C2592.7,660.5 2600.5,651.6 2606.5,641.4C2611.3,633.4 2613.5,624 2618.6,616.1C2623.2,608.9 2628.8,602.4 2634.9,596.5C2641.3,590.4 2648.4,584.7 2656.1,580.2C2664.8,575.2 2674.3,571.7 2683.8,568.8C2691.8,566.4 2700,564.6 2708.3,563.9C2716.4,563.3 2724.6,563.9 2732.7,564.7C2741,565.6 2749.2,566.6 2757.2,568.8C2762.8,570.4 2768.2,572.9 2773.5,575.3C2779,577.8 2784.6,580.4 2789.8,583.5C2795.5,586.9 2800.9,590.8 2806.1,594.9C2810.7,598.5 2814.8,602.5 2819.1,606.3L2841.2,611.2C2842.8,617.9 2844.3,624.6 2846.1,631.2C2849,641.5 2853.4,651.4 2855.4,661.9C2857.4,672.7 2857.8,683.7 2858,694.7C2858.2,703.6 2857.2,712.4 2856.8,721.3L2848.2,721.3C2847.5,716.5 2847.2,711.7 2846.1,707C2844.6,700 2842.4,693.2 2840,686.5C2837,678.1 2833.9,669.8 2829.7,661.9C2825.6,654 2821,646.3 2815.4,639.4C2810,632.6 2803.8,626.4 2797,621C2790,615.4 2782.6,610.1 2774.4,606.6C2765.4,602.7 2755.6,600.3 2745.8,599.5C2735.6,598.5 2725.1,599.3 2715.1,601.5C2702.9,604.2 2691.2,608.9 2680.2,614.8C2669.9,620.4 2660.5,627.7 2651.6,635.3C2642.7,642.8 2634.6,651.2 2627,659.9C2619.6,668.3 2613.3,677.6 2606.5,686.5C2599.7,695.4 2593.2,704.5 2586,713.1C2580.1,720.2 2574.4,728.1 2567.6,733.6C2563.3,737.1 2558.5,740.2 2553.3,741.8C2547,743.7 2540.3,742.8 2533.8,743.2Z" fill="#44969a"/>
<path d="M2547.1,731.6C2553.9,722.7 2561,714 2567.6,704.9C2575.4,694.2 2582.2,682.8 2590.1,672.2C2601.7,656.8 2614.4,641.2 2626.7,627.5C2634.5,619 2642,610 2651.2,603.1C2661.1,595.6 2672.3,589.6 2683.8,585.1C2694.2,581 2705.3,578.1 2716.4,577C2727.3,575.9 2738.4,576.5 2749,578.6C2760.3,580.8 2771.3,584.9 2781.6,590C2790.4,594.4 2798.7,600 2806.1,606.3C2813.4,612.6 2822.6,618.4 2825.7,627.5C2827.8,633.9 2821.9,641.1 2823.6,647.6C2825.7,655.7 2832.5,667.2 2837.9,668.1C2841.3,668.6 2843.4,664 2846.1,661.9C2844.1,664 2842.9,667.8 2840,668.1C2835.4,668.5 2830.7,663.8 2827.7,659.9C2822.9,653.7 2823.4,643.1 2819.1,635.7C2814.1,627 2807,619.6 2799.6,612.8C2792.7,606.5 2785.1,600.7 2776.8,596.5C2768.1,592.2 2758.6,589.2 2749,587.6C2741,586.2 2732.7,585.9 2724.6,586.7C2713.4,587.9 2702.3,590.6 2692,594.9C2683.2,598.5 2675.1,603.9 2667.5,609.6C2658.6,616.3 2650.9,624.5 2643.1,632.4C2630.5,645.1 2617.8,658.2 2606.5,672.2C2597.6,683.2 2590.6,695.7 2581.9,707C2575.4,715.4 2568.1,726.6 2561.4,731.6C2557.3,734.7 2551.9,735.7 2547.1,737.7Z" fill="#5fa8ab"/>
<path d="M2533.8,743.2C2543,731.2 2552.6,719.4 2561.4,707C2570,695 2577.6,682.3 2586,670.1C2592.7,660.5 2600.5,651.6 2606.5,641.4C2611.3,633.4 2613.5,624 2618.6,616.1C2623.2,608.9 2628.8,602.4 2634.9,596.5C2641.3,590.4 2648.4,584.7 2656.1,580.2C2664.8,575.2 2674.3,571.7 2683.8,568.8C2691.8,566.4 2700,564.6 2708.3,563.9C2716.4,563.3 2724.6,563.9 2732.7,564.7C2741,565.6 2749.2,566.6 2757.2,568.8C2762.8,570.4 2768.2,572.9 2773.5,575.3C2779,577.8 2784.6,580.4 2789.8,583.5C2795.5,586.9 2800.9,590.8 2806.1,594.9C2810.7,598.5 2814.8,602.5 2819.1,606.3" fill="none" stroke="#0c1416" stroke-width="1.9"/>
<path d="M2848.2,721.3C2847.5,716.5 2847.2,711.7 2846.1,707C2844.6,700 2842.4,693.2 2840,686.5C2837,678.1 2833.9,669.8 2829.7,661.9C2825.6,654 2821,646.3 2815.4,639.4C2810,632.6 2803.8,626.4 2797,621C2790,615.4 2782.6,610.1 2774.4,606.6C2765.4,602.7 2755.6,600.3 2745.8,599.5C2735.6,598.5 2725.1,599.3 2715.1,601.5C2702.9,604.2 2691.2,608.9 2680.2,614.8C2669.9,620.4 2660.5,627.7 2651.6,635.3C2642.7,642.8 2634.6,651.2 2627,659.9C2619.6,668.3 2613.3,677.6 2606.5,686.5C2599.7,695.4 2593.2,704.5 2586,713.1C2580.1,720.2 2574.4,728.1 2567.6,733.6C2563.3,737.1 2558.5,740.2 2553.3,741.8C2547,743.7 2540.3,742.8 2533.8,743.2" fill="none" stroke="#0c1416" stroke-width="1.2"/>
<path d="M2516.7,506L2608.8,632.4" fill="none" stroke="#0c1416" stroke-width="1.9"/>
<path d="M1762.2,488.7C1757.8,495.7 1753.3,502.7 1749,509.8C1743.6,518.9 1738.4,528.2 1733.2,537.4C1727.9,547 1722.7,556.7 1717.4,566.4C1712.2,576 1706.8,585.7 1701.6,595.3C1697,604 1692.7,612.9 1687.8,621.4C1683.6,628.6 1677.2,639 1674.6,642.5C1673,644.7 1671.1,646.6 1669.3,648.6" fill="none" stroke="#0c1416" stroke-width="1.8" stroke-linecap="round"/>
<path d="M1659.7,643.4C1662.9,645.1 1666.1,646.9 1669.3,648.6" fill="none" stroke="#0c1416" stroke-width="1.8" stroke-linecap="round"/>
<path d="M1966.4,519C1949.5,520.2 1932.4,520.3 1915.5,522.6C1897.8,524.9 1880.2,528.8 1862.9,533.1C1852,535.8 1841.1,538.8 1830.6,542.7C1821.6,546 1812.9,550.2 1804.3,554.5C1795.3,559 1786.5,563.8 1778,569C1771.2,573.1 1764.6,577.5 1758.2,582.2C1751.4,587.2 1744.9,592.5 1738.5,598C1732.1,603.5 1725.6,608.8 1720.1,615.1C1711.2,625.1 1700.3,641.2 1691.3,654.8C1683.8,666.2 1678.4,678.9 1670.2,689.9C1665,696.9 1658.5,702.8 1652.7,709.2" fill="none" stroke="#0c1416" stroke-width="1.8" stroke-linecap="round"/>
<path d="M2014.5,744.3C2014.2,736.7 2014.6,729 2013.6,721.5C2012.8,714.4 2011.1,707.4 2009.3,700.4C2006.8,690.9 2004.1,681.4 2000.5,672.3C1996.1,661.4 1990.9,650.7 1984.7,640.7C1978,630.1 1970.4,620 1961.9,610.9C1953.9,602.4 1945.2,594.5 1935.5,588.1C1924.7,580.8 1912.7,574.9 1900.4,570.5C1889.1,566.5 1874.5,563.9 1865.3,562.6C1859.6,561.9 1853.8,561.6 1848,561.8C1842,562 1836,563.1 1830,564C1823.4,565 1816.8,565.9 1810.4,567.6C1805.1,569 1800,570.8 1795,573C1789.1,575.6 1783.7,579 1778,582C1771.4,585.5 1764.5,589.1 1758.2,592.5C1754.2,594.6 1750.1,596.4 1746.4,599C1741.2,602.6 1736.5,607 1731.9,611.5C1728.4,615 1725,618.6 1722,622.5C1717.2,628.8 1704.9,648.6 1696.5,661.8C1688.8,674 1680.8,688.1 1673.7,698.7C1669.3,705.3 1661.8,714.8 1659.7,718C1658.3,720 1657.1,722.1 1655.8,724.1" fill="none" stroke="#0c1416" stroke-width="1.8" stroke-linecap="round"/>
<path d="M1966.4,519C1967.6,526.6 1968.5,534.3 1969.9,541.9C1971.4,549.5 1973.3,557.1 1975.2,564.7C1978.2,576.8 1983.7,596.7 1988.2,612.7C1993.8,632.6 1999.8,652.5 2005.7,672.3C2010.3,687.6 2015.1,702.8 2019.8,718" fill="none" stroke="#0c1416" stroke-width="1.8" stroke-linecap="round"/>
<path d="M1966.4,519C1966.7,512 1966.7,505 1967.3,498C1967.9,490.9 1968.6,483.9 1969.9,476.9C1971.3,469.8 1972.9,462.7 1975.2,455.9C1978.1,447.4 1981.4,439 1985.7,431.3C1990.8,422.2 1996.7,413.4 2003.9,405.9C2014.2,395 2026.2,385.5 2039,377.8C2052.7,369.5 2067.7,363.5 2082.9,358.5C2100,352.8 2117.7,349.1 2135.5,346.2C2152.9,343.3 2173.2,341.7 2188.2,340.9C2197.5,340.4 2206.9,340.7 2216.3,340.6" fill="none" stroke="#0c1416" stroke-width="1.8" stroke-linecap="round"/>
<path d="M2219.7,341.2C2234,341.5 2248.4,340.7 2262.7,342.1C2274.5,343.3 2286.3,345.3 2297.8,348.3C2309.8,351.4 2321.5,355.6 2332.9,360.6C2345,365.8 2356.8,372 2368,379C2377.2,384.8 2385.9,391.4 2394.3,398.3C2403.6,406 2412.4,414.1 2420.6,422.9C2430.1,432.8 2438.5,443.7 2447,454.5C2456,465.9 2464.8,477.6 2473.3,489.6C2479.4,498.2 2484.8,507.3 2490.8,515.9C2496.8,524.4 2504.9,531.7 2509.3,541.1C2512.7,548.2 2513.8,556.2 2515.1,563.9C2516.3,571.5 2516.4,579.4 2516.7,586.7C2516.9,591.3 2516.8,595.9 2516.8,600.5C2516.8,607.8 2516.8,681 2516.8,721.3" fill="none" stroke="#0c1416" stroke-width="1.8" stroke-linecap="round"/>
<path d="M2217.7,340.6L2219.8,530L2221.8,719.8" fill="none" stroke="#0c1416" stroke-width="1.9"/>
<path d="M1966.4,519L2219.7,519.4L2490.8,518.2" fill="none" stroke="#0c1416" stroke-width="1.9"/>
<clipPath id="qclip"><path d="M1966.4,362.5C1971.3,363.1 1978.4,366.8 1982.2,369.8C1985.1,372.2 1988.8,376.9 1990.1,380.4C1991.3,383.6 1991.8,389.3 1991,392.7C1989.9,397.2 1984.7,402.8 1982.2,406.7C1979.3,411.2 1974.4,417.9 1971.7,422.5C1968.9,427.3 1965.1,435 1962.9,440.1C1960.7,445.3 1957.7,453.9 1955.9,459.4C1954.3,464.2 1952.1,472 1950.6,476.9C1949.2,481.8 1947.8,489.9 1945.4,494.5C1943.6,497.8 1940,503.2 1936.6,505C1931.2,507.9 1915.1,507.4 1906.8,508.2C1894.5,509.2 1873.9,510.4 1862.9,511.1C1856,511.6 1844.8,513.7 1838.3,512.9C1834.2,512.4 1827.5,511 1824.3,508.5C1820.6,505.7 1816.8,498.9 1815.5,494.5C1814.3,490.2 1814.7,483 1815.5,478.7C1816.5,473 1820,464.5 1822.5,459.4C1825.3,453.6 1831,445.2 1834.8,440.1C1839.3,433.9 1846.9,424.4 1852.3,419C1858.2,413 1868.4,404.6 1875.2,399.7C1882.1,394.7 1893.8,387.7 1901.5,383.9C1909.1,380.1 1921.6,375.4 1929.6,372.5C1935.4,370.3 1944.6,367 1950.6,365.5C1955,364.3 1962,361.9 1966.4,362.5Z"/></clipPath>
<path d="M1966.4,362.5C1971.3,363.1 1978.4,366.8 1982.2,369.8C1985.1,372.2 1988.8,376.9 1990.1,380.4C1991.3,383.6 1991.8,389.3 1991,392.7C1989.9,397.2 1984.7,402.8 1982.2,406.7C1979.3,411.2 1974.4,417.9 1971.7,422.5C1968.9,427.3 1965.1,435 1962.9,440.1C1960.7,445.3 1957.7,453.9 1955.9,459.4C1954.3,464.2 1952.1,472 1950.6,476.9C1949.2,481.8 1947.8,489.9 1945.4,494.5C1943.6,497.8 1940,503.2 1936.6,505C1931.2,507.9 1915.1,507.4 1906.8,508.2C1894.5,509.2 1873.9,510.4 1862.9,511.1C1856,511.6 1844.8,513.7 1838.3,512.9C1834.2,512.4 1827.5,511 1824.3,508.5C1820.6,505.7 1816.8,498.9 1815.5,494.5C1814.3,490.2 1814.7,483 1815.5,478.7C1816.5,473 1820,464.5 1822.5,459.4C1825.3,453.6 1831,445.2 1834.8,440.1C1839.3,433.9 1846.9,424.4 1852.3,419C1858.2,413 1868.4,404.6 1875.2,399.7C1882.1,394.7 1893.8,387.7 1901.5,383.9C1909.1,380.1 1921.6,375.4 1929.6,372.5C1935.4,370.3 1944.6,367 1950.6,365.5C1955,364.3 1962,361.9 1966.4,362.5Z" fill="#e5cfc2"/>
<g clip-path="url(#qclip)">
<path d="M1996.3,369.8C1986.9,372.5 1977.4,374.7 1968.2,377.7C1959.3,380.6 1950.3,383.4 1941.9,387.4C1932.6,391.8 1923.7,397.1 1915.5,403.2C1907.9,408.9 1901,415.5 1894.5,422.5C1889.3,428 1884.7,433.9 1880.4,440.1C1875.3,447.4 1871.1,455.3 1866.4,462.9L1941.9,515.5L2003.3,410.2Z" fill="#fff" stroke="#b4bcc3" stroke-width="2.2"/>
<path d="M1852.3,476.9C1855.9,472.2 1858.8,467.1 1862.9,462.9C1866,459.6 1869.6,456.7 1873.4,454.1C1878.4,450.7 1883.5,447.4 1889.2,445.3C1894.8,443.3 1900.8,442 1906.8,441.8C1911.5,441.6 1916.4,441.8 1920.8,443.6C1925.5,445.4 1929.1,449.3 1933.1,452.3C1936.7,455.1 1940.2,458 1943.6,461.1C1947,464.2 1950.1,467.6 1953.3,470.8L1941.9,517.3L1862.9,517.3L1855.9,494.5Z" fill="#8b8385" stroke="#4a4446" stroke-width="1"/>
<path d="M1861.1,471.6C1867.6,475.2 1874.2,478.3 1880.4,482.2C1886.5,485.9 1892.4,490 1898,494.5C1902.6,498.2 1906.8,502.7 1911.1,506.8" fill="none" stroke="#5a5456" stroke-width="1"/>
</g>
<path d="M1966.4,362.5C1971.3,363.1 1978.4,366.8 1982.2,369.8C1985.1,372.2 1988.8,376.9 1990.1,380.4C1991.3,383.6 1991.8,389.3 1991,392.7C1989.9,397.2 1984.7,402.8 1982.2,406.7C1979.3,411.2 1974.4,417.9 1971.7,422.5C1968.9,427.3 1965.1,435 1962.9,440.1C1960.7,445.3 1957.7,453.9 1955.9,459.4C1954.3,464.2 1952.1,472 1950.6,476.9C1949.2,481.8 1947.8,489.9 1945.4,494.5C1943.6,497.8 1940,503.2 1936.6,505C1931.2,507.9 1915.1,507.4 1906.8,508.2C1894.5,509.2 1873.9,510.4 1862.9,511.1C1856,511.6 1844.8,513.7 1838.3,512.9C1834.2,512.4 1827.5,511 1824.3,508.5C1820.6,505.7 1816.8,498.9 1815.5,494.5C1814.3,490.2 1814.7,483 1815.5,478.7C1816.5,473 1820,464.5 1822.5,459.4C1825.3,453.6 1831,445.2 1834.8,440.1C1839.3,433.9 1846.9,424.4 1852.3,419C1858.2,413 1868.4,404.6 1875.2,399.7C1882.1,394.7 1893.8,387.7 1901.5,383.9C1909.1,380.1 1921.6,375.4 1929.6,372.5C1935.4,370.3 1944.6,367 1950.6,365.5C1955,364.3 1962,361.9 1966.4,362.5Z" fill="none" stroke="#050505" stroke-width="3.4"/>
<path d="M1981.4,495.4C1980.7,492.2 1981.3,486.3 1981.9,483.1C1982.9,478.2 1986.2,470.1 1988.1,465.5C1989.7,461.7 1993.1,455.1 1995.1,451.5C1998.4,445.6 2007,430.2 2012.7,423.4C2018.8,416 2031.3,404.6 2039,398.8C2047.7,392.3 2064.3,382.6 2074.1,377.8C2083.1,373.3 2099.5,366.6 2109.2,363.7C2118.4,361 2134.8,357.9 2144.3,356.7C2153.6,355.5 2173.4,354.3 2179.4,354.6C2183.2,354.8 2190,355.2 2193.5,356.7C2196.8,358.2 2202.1,362.4 2204,365.5C2206.2,369.2 2207,377 2207.5,381.3C2208.4,388.1 2208.9,417.3 2209.3,430.4C2209.6,444.5 2210.6,477 2210.1,483.1C2209.8,486.9 2209.4,493.8 2207.5,497.1C2206,499.9 2201.6,503.9 2198.7,505C2194,506.9 2152.4,506.4 2135.5,506.8C2108.6,507.4 1999.2,510.3 1995.1,509.4C1992.6,508.8 1988.2,506.9 1986.3,505C1984.3,503 1982,498.2 1981.4,495.4Z" fill="#e5cfc2" stroke="#050505" stroke-width="3"/>
<path d="M2004.2,481.3C2004,478.5 2005.6,473.5 2006.5,470.8C2007.8,466.9 2010.7,460.3 2012.7,456.8C2015.8,451 2024.8,436.9 2030.2,430.4C2036.4,423.1 2048.9,411.6 2056.5,405.9C2065.3,399.3 2081.8,389.5 2091.6,384.8C2100.7,380.4 2117.1,374.3 2126.8,371.6C2135.9,369.1 2153.6,366 2161.9,365.5C2167,365.1 2176.5,364.4 2181.2,366.4C2184.1,367.6 2188.4,371.5 2189.9,374.3C2191.8,377.6 2192.2,384.5 2192.6,388.3C2193.2,394.4 2193,419.2 2193.1,430.4C2193.2,443.5 2195,474.4 2193.5,479.6C2192.5,482.8 2189.4,488.5 2186.4,490.1C2181.7,492.7 2123.4,491.2 2100.4,491.5C2077.5,491.9 2017.8,493.5 2014.4,492.7C2012.3,492.3 2008.5,490.8 2007,489.2C2005.5,487.6 2004.4,483.6 2004.2,481.3Z" fill="#fff" stroke="#bfc6ca" stroke-width="2.4"/>
<clipPath id="fclip"><path d="M2234.6,366.7C2234.9,364.1 2235.6,359.1 2237.2,357C2238.7,355.2 2242.7,353.1 2245.1,352.7C2248.9,352 2271,355.6 2280.2,357.9C2289.8,360.3 2306.2,366.3 2315.3,370.2C2325,374.3 2341.4,382.4 2350.4,387.8C2360.2,393.6 2376.8,405 2385.5,412.3C2393.1,418.7 2405.3,431.2 2411.9,438.7C2417.4,444.9 2426.4,456.7 2431.2,463.2C2434.1,467.3 2439.2,474.7 2441.7,479C2443.8,482.7 2448.6,489.1 2448.7,493.1C2448.8,495.6 2446.9,500 2445.2,501.9C2443.1,504.2 2437.7,506.4 2434.7,507.1C2429.8,508.3 2372.9,507.1 2350.4,507.1C2323.3,507.1 2253.4,508.1 2248.6,507.1C2245.6,506.5 2240.2,504.9 2238.1,502.7C2236.2,500.8 2235,495.8 2234.6,493.1C2233.8,488.8 2234.6,446.7 2234.6,429.9C2234.6,413 2234,370.9 2234.6,366.7Z"/></clipPath>
<path d="M2234.6,366.7C2234.9,364.1 2235.6,359.1 2237.2,357C2238.7,355.2 2242.7,353.1 2245.1,352.7C2248.9,352 2271,355.6 2280.2,357.9C2289.8,360.3 2306.2,366.3 2315.3,370.2C2325,374.3 2341.4,382.4 2350.4,387.8C2360.2,393.6 2376.8,405 2385.5,412.3C2393.1,418.7 2405.3,431.2 2411.9,438.7C2417.4,444.9 2426.4,456.7 2431.2,463.2C2434.1,467.3 2439.2,474.7 2441.7,479C2443.8,482.7 2448.6,489.1 2448.7,493.1C2448.8,495.6 2446.9,500 2445.2,501.9C2443.1,504.2 2437.7,506.4 2434.7,507.1C2429.8,508.3 2372.9,507.1 2350.4,507.1C2323.3,507.1 2253.4,508.1 2248.6,507.1C2245.6,506.5 2240.2,504.9 2238.1,502.7C2236.2,500.8 2235,495.8 2234.6,493.1C2233.8,488.8 2234.6,446.7 2234.6,429.9C2234.6,413 2234,370.9 2234.6,366.7Z" fill="#e5cfc2"/>
<g clip-path="url(#fclip)">
<path d="M2227.6,364.6C2237.4,365.4 2253,365.6 2262.7,367.6C2272.8,369.6 2288.3,374.9 2297.8,379C2308.1,383.4 2323.5,392.1 2332.9,398.3C2340.7,403.5 2352.5,412.8 2359.2,419.4C2364.7,424.7 2372.1,434.3 2376.8,440.4C2380.4,445.2 2386.1,452.8 2389,458C2391.4,462.2 2395.6,469.8 2396.1,473.8C2396.3,476.3 2395.7,480.4 2394.3,482.6C2392.7,485.1 2388,487.1 2385.5,488.9L2227.6,489.2Z" fill="#fff" stroke="#d9d2cd" stroke-width="1.5"/>
<path d="M2401.3,412.3L2410.1,412.3L2443.5,463.2L2436.4,463.2Z" fill="#f4ece8" opacity=".8"/>
<ellipse cx="2353.1" cy="488.7" rx="50" ry="9.5" transform="rotate(-43.5 2353.1 488.7)" fill="none" stroke="#58595b" stroke-width="7.3"/>
<path d="M2227.6,505L2455.7,505L2455.7,528.2L2227.6,528.2Z" fill="#e5cfc2"/>
<path d="M2371.5,425L2408.4,425" stroke="#f6eee9" stroke-width="2"/>
</g>
<path d="M2234.6,366.7C2234.9,364.1 2235.6,359.1 2237.2,357C2238.7,355.2 2242.7,353.1 2245.1,352.7C2248.9,352 2271,355.6 2280.2,357.9C2289.8,360.3 2306.2,366.3 2315.3,370.2C2325,374.3 2341.4,382.4 2350.4,387.8C2360.2,393.6 2376.8,405 2385.5,412.3C2393.1,418.7 2405.3,431.2 2411.9,438.7C2417.4,444.9 2426.4,456.7 2431.2,463.2C2434.1,467.3 2439.2,474.7 2441.7,479C2443.8,482.7 2448.6,489.1 2448.7,493.1C2448.8,495.6 2446.9,500 2445.2,501.9C2443.1,504.2 2437.7,506.4 2434.7,507.1C2429.8,508.3 2372.9,507.1 2350.4,507.1C2323.3,507.1 2253.4,508.1 2248.6,507.1C2245.6,506.5 2240.2,504.9 2238.1,502.7C2236.2,500.8 2235,495.8 2234.6,493.1C2233.8,488.8 2234.6,446.7 2234.6,429.9C2234.6,413 2234,370.9 2234.6,366.7Z" fill="none" stroke="#e3ecee" stroke-width="2.4"/>
<path d="M2443.5,457.1C2446.4,455.2 2452.7,457.2 2455.7,458.9C2459,460.6 2462.6,465.4 2464.5,468.5C2466.2,471.2 2468.5,475.9 2468.9,479C2469.4,483 2468.4,490.1 2467.2,493.1C2466.4,494.9 2464.7,498.4 2462.8,498.7C2459.6,499.2 2454.9,493.8 2452.2,491.3C2449.4,488.7 2445.3,484.2 2443.5,480.8C2441.8,477.6 2439.9,472.1 2439.9,468.5C2440,465.2 2440.6,458.9 2443.5,457.1Z" fill="url(#mirg)" stroke="#222" stroke-width="1.2"/>
<path d="M2461,479L2477.7,479.9L2472.8,493.1L2472.8,503.6L2468,504.7L2467.2,491.3L2470.1,483.4L2461.9,482.6Z" fill="#f4f4f4" stroke="#222" stroke-width="1.1" stroke-linejoin="round"/>
<circle cx="1995.5" cy="537.6" r="8.6" fill="#ededed" stroke="#1b1b1b" stroke-width="1.2"/>
<path d="M1972,537C1972,535.8 1985.5,535.2 1998.5,535L1999.1,539.8C1985.5,539.6 1972,538.6 1972,537Z" fill="#f7f7f7" stroke="#1b1b1b" stroke-width="1"/>
<circle cx="2250.2" cy="538" r="8" fill="#e9e9e9" stroke="#1b1b1b" stroke-width="1.2"/>
<path d="M2233.7,538L2244.2,535.8L2256.2,535.8L2262.2,538L2256.2,540.2L2244.2,540.2Z" fill="#f7f7f7" stroke="#1b1b1b" stroke-width="1"/>
<circle cx="2252.4" cy="538" r="2.1" fill="#fff" stroke="#333" stroke-width=".7"/>
<ellipse cx="1745.3" cy="610.3" rx="11" ry="7" transform="rotate(-35 1745.3 610.3)" fill="#e4edf0"/>
<rect x="1733.3" y="598.3" width="16" height="14" rx="4" transform="rotate(-35 1741.3 605.3)" fill="#050505"/>
<path d="M1754.9,478.7L1761.1,472.5L1771.6,479.5L1764.6,490.1L1757.6,485.7Z" fill="#dadddd" stroke="#666" stroke-width=".8" stroke-linejoin="round"/>
<linearGradient id="sillg" x1="0" y1="0" x2="0" y2="1"><stop offset="0" stop-color="#b9b9b9"/><stop offset="1" stop-color="#d2d2d2"/></linearGradient>
<path d="M2021.4,719.8L2518.3,723.3L2533.9,730.7L2533.9,744.3L2015.8,743.3Z" fill="#8e8e8e" stroke="#1a1a1a" stroke-width="1.1" stroke-linejoin="round"/>
<path d="M2021.4,720L2518.3,723.5L2533.4,731L2533.4,735.6L2017.7,734.2Z" fill="url(#sillg)"/>
<path d="M2017.7,734.5L2533.4,735.9" stroke="#2a2a2a" stroke-width="1.1"/>
<path d="M2824.4,592.5L2834.1,596.5L2827.6,615.8L2818.5,611.5Z" fill="#1c1c1c"/>
<path d="M2802.8,568.8C2803.8,564.3 2810.3,558.8 2814.3,556.1C2819.5,552.5 2829.2,549.3 2835.5,547.9C2840.8,546.8 2851.2,545.1 2855,546.8C2857.4,547.9 2859.8,551.7 2860.7,554.1C2862.3,558 2862.4,565.9 2862.4,570.4C2862.4,575 2862.1,582.4 2860.7,586.7C2859.7,589.8 2857.8,595.1 2855,596.5C2850.9,598.6 2843.2,596 2838.7,594.9C2833,593.4 2824.4,589.5 2819.1,586.7C2815.3,584.8 2808.8,582 2806.1,578.6C2804.3,576.3 2802.3,571.6 2802.8,568.8Z" fill="#44979a" stroke="#0c1416" stroke-width="1.4"/>
<path d="M2858.6,552.5C2859.7,558.5 2861.9,564.4 2862,570.4C2862.1,576.8 2860.1,582.9 2859.1,589.2" fill="none" stroke="#f3f6f7" stroke-width="3"/>
<path d="M2833.8,545.5L2846.9,545.5L2846.9,548.3L2833.8,548.3Z" fill="#eef2f3" stroke="#333" stroke-width="1"/>
<linearGradient id="redg" x1="0" y1="0" x2="1" y2="0"><stop offset="0" stop-color="#f23b26"/><stop offset=".6" stop-color="#e02e1c"/><stop offset="1" stop-color="#8a1a10"/></linearGradient>
<path d="M1636,650L1658.3,650L1658.3,683.2L1636,682.7Z" fill="#0b0606"/>
<path d="M1637,651.5L1649.1,651.5L1649.1,669.4L1637,669.4Z" fill="url(#redg)"/>
<path d="M1637.4,671.1L1648.1,671.1L1648.1,681.6L1637.4,681.6Z" fill="#f0872b"/>
<path d="M1658.3,650.4L1668.1,651.1" stroke="#111" stroke-width="1.1"/>
<path d="M1635.1,685L1655.5,684.1L1636,698.7L1650.9,709.6L1656.5,713.1L1652.3,750.5L1617.6,744.3L1619.3,700.4L1626.3,691.6Z" fill="#d6d6d6" stroke="#111" stroke-width="1.2" stroke-linejoin="round"/>
<path d="M1644.8,718L1655.8,715.2L1652.3,749.6L1643.9,741.7Z" fill="#ececec"/>
<path d="M1617.9,737.3L1643.9,741.7L1652,749.9L1617.9,744Z" fill="#f7f7f7"/>
<path d="M1618.4,712.7L1644.8,718L1643.9,741.7L1617.6,737.3Z" fill="#171717"/>
<path d="M2881,641.4C2884.4,641.3 2887.9,648.4 2889.1,651.7C2890.7,655.8 2890.4,663.7 2890.2,668.1C2889.8,674.2 2887.3,684.6 2886.1,690.6C2885.3,694.4 2883.1,701 2882.6,704.9C2882,709.3 2882.3,717 2882.2,721.3C2882.1,725.7 2884.9,734.5 2882,737.7C2878.1,742 2864.6,744.2 2860.5,740.2C2857.3,737 2862.5,727.9 2862.1,723.4C2861.7,718.4 2857.4,710.3 2857.4,705.3C2857.4,697.9 2862.3,685.4 2864.6,678.3C2866.9,670.8 2872.7,654.9 2874.8,650.7C2876.1,648 2878,641.6 2881,641.4Z" fill="#ededed" stroke="#111" stroke-width="1.3"/>
<path d="M2884.6,644.5C2886.7,650.3 2890,655.8 2890.8,661.9C2891.8,670.1 2890.4,678.4 2888.7,686.5C2887.6,692.1 2885.2,697.4 2883.4,702.9" fill="none" stroke="#111" stroke-width="3.2"/>
<path d="M2858,706C2861.6,704.9 2865,702.7 2868.7,702.9C2873.2,703.1 2877.1,706.3 2881.4,708" fill="none" stroke="#333" stroke-width="1"/>
<path d="M2861.7,721.3C2864.7,720.8 2867.7,719.7 2870.7,719.7C2874.4,719.6 2878.1,720.8 2881.8,721.3" fill="none" stroke="#333" stroke-width="1"/>
</g>
</svg>

<div class="shade"></div>
</body>
</html>
